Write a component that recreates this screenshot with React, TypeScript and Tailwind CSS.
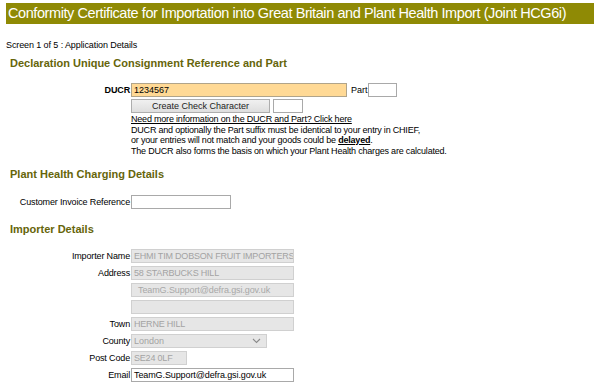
import React from "react";

const font = { fontFamily: '"Liberation Sans", Arial, sans-serif' };

function Label({ children, bold }: { children?: React.ReactNode; bold?: boolean }) {
  return (
    <div className={`w-[131px] shrink-0 text-right pr-[1px] text-[9px] leading-[14px] tracking-[-0.15px] text-black whitespace-nowrap ${bold ? "font-bold" : ""}`}>
      {children}
    </div>
  );
}

function Disabled({ w, value }: { w: string; value?: string }) {
  return (
    <div className={`${w} h-[14px] border border-[#d0d0d0] bg-[#e6e6e6] text-[9px] leading-[12px] pl-[2px] overflow-hidden whitespace-nowrap tracking-[-0.2px] text-[#a3a3a3]`}>
      {value}
    </div>
  );
}

export default function App() {
  return (
    <div className="w-[600px] h-[386px] bg-white overflow-hidden" style={font}>
      <div className="pt-[3px] px-[6px]">
        <div className="h-[21px] bg-[#8f8a05] flex items-center pl-[2px] text-white text-[14.5px] tracking-[-0.42px] whitespace-nowrap overflow-hidden">
          Conformity Certificate for Importation into Great Britain and Plant Health Import (Joint HCG6i)
        </div>
      </div>

      <div className="pl-[6px] mt-[15px] text-[9px] leading-[12px] tracking-[-0.1px] text-black">Screen 1 of 5 : Application Details</div>

      <div className="pl-[10px] mt-[6px] text-[11px] leading-[12px] font-bold text-[#66650a]">
        Declaration Unique Consignment Reference and Part
      </div>

      <div className="mt-[14px] flex items-center">
        <Label bold>DUCR</Label>
        <div className="w-[216px] h-[14px] border border-[#b0a48a] bg-[#ffd995] text-[9px] leading-[12px] pl-[2px] text-black">1234567</div>
        <div className="text-[9px] leading-[14px] pl-[4px] pr-[0px]">Part</div>
        <div className="w-[29px] h-[14px] border border-[#a9a9a9] bg-white"></div>
      </div>

      <div className="mt-[2px] flex items-center">
        <Label />
        <div className="w-[139px] h-[14px] border border-[#adadad] bg-gradient-to-b from-[#f0f0f0] to-[#dedede] text-[9px] leading-[12px] text-center text-[#222]">
          Create Check Character
        </div>
        <div className="ml-[3px] w-[30px] h-[14px] border border-[#a9a9a9] bg-white"></div>
      </div>

      <div className="flex mt-[1px]">
        <Label />
        <div className="text-[9px] leading-[10.5px] text-black tracking-[-0.2px]">
          <div className="underline">Need more information on the DUCR and Part? Click here</div>
          <div>DUCR and optionally the Part suffix must be identical to your entry in CHIEF,</div>
          <div>
            or your entries will not match and your goods could be <span className="font-bold underline">delayed</span>.
          </div>
          <div>The DUCR also forms the basis on which your Plant Health charges are calculated.</div>
        </div>
      </div>

      <div className="pl-[10px] mt-[12px] text-[11px] leading-[12px] font-bold text-[#66650a]">
        Plant Health Charging Details
      </div>

      <div className="mt-[15px] flex items-center">
        <Label>Customer Invoice Reference</Label>
        <div className="w-[100px] h-[14px] border border-[#a9a9a9] bg-white"></div>
      </div>

      <div className="pl-[10px] mt-[14px] text-[11px] leading-[12px] font-bold text-[#66650a]">
        Importer Details
      </div>

      <div className="mt-[14px] flex flex-col gap-[3px]">
        <div className="flex items-center">
          <Label>Importer Name</Label>
          <Disabled w="w-[163px]" value="EHMI TIM DOBSON FRUIT IMPORTERS" />
        </div>
        <div className="flex items-center">
          <Label>Address</Label>
          <Disabled w="w-[163px]" value="58 STARBUCKS HILL" />
        </div>
        <div className="flex items-center">
          <Label />
          <div className="w-[163px] h-[14px] border border-[#d0d0d0] bg-[#e6e6e6] text-[9px] leading-[12px] pl-[6px] tracking-[-0.1px] text-[#a8a8a8] whitespace-nowrap overflow-hidden">
            TeamG.Support@defra.gsi.gov.uk
          </div>
        </div>
        <div className="flex items-center">
          <Label />
          <Disabled w="w-[163px]" />
        </div>
        <div className="flex items-center">
          <Label>Town</Label>
          <Disabled w="w-[163px]" value="HERNE HILL" />
        </div>
        <div className="flex items-center">
          <Label>County</Label>
          <div className="w-[136px] h-[14px] border border-[#d0d0d0] bg-[#e6e6e6] text-[9px] leading-[12px] pl-[2px] text-[#a3a3a3] flex items-center justify-between">
            <span>London</span>
            <svg width="9" height="6" viewBox="0 0 9 6" className="mr-[5px]">
              <path d="M1 1 L4.5 4.5 L8 1" fill="none" stroke="#8a8a8a" strokeWidth="1.1" />
            </svg>
          </div>
        </div>
        <div className="flex items-center">
          <Label>Post Code</Label>
          <Disabled w="w-[56px]" value="SE24 0LF" />
        </div>
        <div className="flex items-center">
          <Label>Email</Label>
          <div className="w-[163px] h-[14px] border border-[#a9a9a9] bg-white text-[9px] leading-[12px] pl-[2px] tracking-[-0.1px] text-black whitespace-nowrap overflow-hidden">
            TeamG.Support@defra.gsi.gov.uk
          </div>
        </div>
      </div>
    </div>
  );
}
